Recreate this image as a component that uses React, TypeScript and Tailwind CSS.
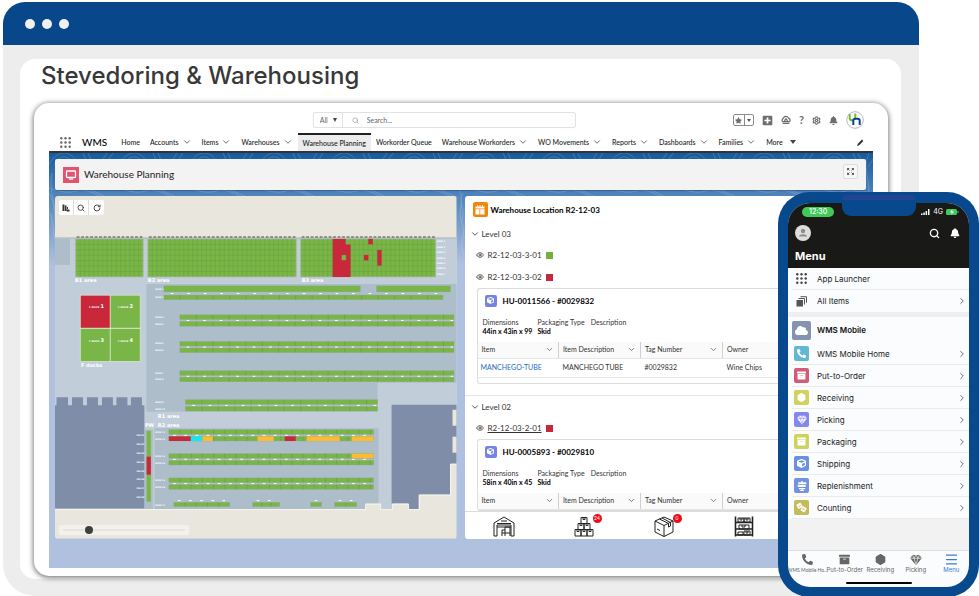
import React from "react";
import {
  FaPhoneAlt,
  FaCloud,
  FaArchive,
  FaStar,
  FaBell,
  FaCube,
  FaPlusSquare,
} from "react-icons/fa";
import { BsHexagonFill } from "react-icons/bs";
import {
  ChevronDown,
  ChevronRight,
  Search,
  Settings,
  RotateCw,
  Eye,
  Menu as MenuIcon,
} from "lucide-react";

const GREEN = "#7ab547";
const RED = "#c8283a";
const AMBER = "#fdbb30";
const CYAN = "#12e9f2";
const SLATE = "#808da8";
const FLOOR = "#adbdca";
const LIGHT = "#c1ceda";

/* ---------- small drawings ---------- */

function Waffle({ className }: { className: string }) {
  return (
    <svg viewBox="0 0 11 11" className={className} fill="currentColor" aria-hidden="true">
      {[1.3, 5.5, 9.7].map((y) =>
        [1.3, 5.5, 9.7].map((x) => <circle key={`${x}-${y}`} cx={x} cy={y} r="1.2" />)
      )}
    </svg>
  );
}

function Gem({ className }: { className: string }) {
  return (
    <svg viewBox="0 0 24 22" className={className} aria-hidden="true">
      <path d="M5 1h14l4.500 6.500L12 21.500.5 7.500z" fill="currentColor" />
      <path
        d="M1 7.500h22M8 7.500L12 20l4-12.500M5 1l3 6.500L12 1l4 6.500L19 1"
        fill="none"
        stroke="var(--gem-line)"
        strokeWidth="1.300"
      />
    </svg>
  );
}

function Signpost({ className }: { className: string }) {
  return (
    <svg viewBox="0 0 16 16" className={className} fill="currentColor" aria-hidden="true">
      <path d="M7 0h2v2h5l1.500 1.500L14 5H2V2h5zM2 6.500h12v3H2L.5 8zM3 11h10v2H9v1.500h2V16H5v-1.500h2V13H3z" />
    </svg>
  );
}

function Tally({ className }: { className: string }) {
  return (
    <svg viewBox="0 0 16 16" className={className} aria-hidden="true">
      <rect x="1.500" y="2" width="7" height="7" rx="1" transform="rotate(-30 5 5.500)" fill="currentColor" />
      <rect x="7.500" y="7" width="7" height="7" rx="1" transform="rotate(30 11 10.500)" fill="currentColor" />
      <path d="M3.500 6l1.300 1.200L7 4.200M9 9l4 3M10 12l2-3" stroke="#c5bb5b" strokeWidth="1" fill="none" />
    </svg>
  );
}

function Layers({ className }: { className: string }) {
  return (
    <svg viewBox="0 0 11 11" className={className} aria-hidden="true">
      <rect x="0.500" y="4" width="6.500" height="6.500" fill="currentColor" />
      <path d="M2.500 2.500h6v6M4.500.7h6v6" fill="none" stroke="currentColor" strokeWidth="1" />
    </svg>
  );
}

function Monitor({ className }: { className: string }) {
  return (
    <svg viewBox="0 0 16 16" className={className} aria-hidden="true">
      <rect x="3.500" y="4" width="9" height="6.500" rx="0.800" fill="none" stroke="white" strokeWidth="1.300" />
      <path d="M6 11.500h4v1.200H6z" fill="white" />
    </svg>
  );
}

function Expand({ className }: { className: string }) {
  return (
    <svg viewBox="0 0 8 8" className={className} fill="none" stroke="#444" strokeWidth="1" aria-hidden="true">
      <path d="M.5 2.500v-2h2M5.500.5h2v2M7.500 5.500v2h-2M2.500 7.500h-2v-2M.8.8l2 2M7.200.8l-2 2M7.200 7.200l-2-2M.8 7.200l2-2" />
    </svg>
  );
}

function Guidance({ className }: { className: string }) {
  return (
    <svg viewBox="0 0 12 11" className={className} fill="none" stroke="#706e6b" strokeWidth="1.500" aria-hidden="true">
      <path d="M1.800 7.500A3 3 0 0 1 2.800 3.500 3.300 3.300 0 0 1 9 3.300a2.700 2.700 0 0 1 1.300 4.200z" />
      <path d="M4 6.500l2-2.500 2 2.500M2 9.500h8" />
    </svg>
  );
}

function Logo({ className }: { className: string }) {
  return (
    <svg viewBox="0 0 18 18" className={className} role="img" aria-label="User">
      <circle cx="9" cy="9" r="8.300" fill="white" stroke="#9c9c9c" strokeWidth="0.700" />
      <path d="M3.700 3v4.300a2 2 0 0 0 2 2h2" fill="none" stroke="#6dbb2a" strokeWidth="1.900" />
      <path d="M9.300 2.500v6" fill="none" stroke="#6dbb2a" strokeWidth="1.900" />
      <path d="M7.300 14V9.500a1.700 1.700 0 0 1 1.700-1.700h2.700a2 2 0 0 1 2 2V14" fill="none" stroke="#0d3f8f" strokeWidth="2" />
    </svg>
  );
}

function Contours() {
  const xs = Array.from({ length: 13 }, (_, i) => i * 70);
  return (
    <svg viewBox="0 0 824 415" preserveAspectRatio="none" className="absolute inset-0 size-full" aria-hidden="true">
      <g fill="none" stroke="white" strokeWidth="0.600" opacity="0.280">
        {xs.map((x) => (
          <g key={x}>
            <path d={`M${x} 12C${x + 8} -4 ${x + 22} -4 ${x + 30} 12`} />
            <path d={`M${x + 5} 12C${x + 11} 1 ${x + 19} 1 ${x + 25} 12`} />
            <path d={`M${x + 34} 0l6 14M${x + 39} 0l6 14M${x + 58} 0l-9 14M${x + 64} 0l-9 14`} />
            <path d={`M${x} 35c12 4 20 6 30 2s18 4 30 8M${x + 8} 32c10 5 30 2 44 12`} />
          </g>
        ))}
        <path d="M0 40c8 12 5 30 8 46M3 20c-4 20 4 26 4 50M1 60c5 14 2 20 6 30M410 36c6 12-2 22 3 34s-4 22 2 32M414 40c-6 10 4 18-2 30M820 0c-8 18 4 28-2 50" />
      </g>
    </svg>
  );
}

/* ---------- warehouse map ---------- */

function Strip({ x, x2, y, h = 4, cell = 16.500, fill = GREEN }: { x: number; x2: number; y: number; h?: number; cell?: number; fill?: string }) {
  const ticks: number[] = [];
  for (let t = x + cell; t < x2 - 2; t += cell) ticks.push(t);
  return (
    <g>
      <rect x={x} y={y} width={x2 - x} height={h} fill={fill} stroke="#92a98c" strokeWidth="0.400" />
      {ticks.map((t) => (
        <path key={t} d={`M${t} ${y}v${h}`} stroke="#5f983c" strokeWidth="0.500" />
      ))}
    </g>
  );
}

function Pair({ x, x2, y, y2, cell = 16.500 }: { x: number; x2: number; y: number; y2: number; cell?: number }) {
  const marks: number[] = [];
  for (let t = x + cell / 2; t < x2; t += cell) marks.push(t);
  return (
    <g>
      <Strip x={x} x2={x2} y={y} cell={cell} h={4.600} />
      <Strip x={x} x2={x2} y={y2} cell={cell} h={4.600} />
      {marks.map((m) => (
        <rect key={m} x={m - 1.300} y={(y + 4.600 + y2) / 2 - 0.500} width="2.600" height="1" fill="white" />
      ))}
    </g>
  );
}

function Block({ x, cols }: { x: number; cols: number }) {
  const w = cols * 4.500;
  return (
    <g>
      <rect x={x} y="239" width={w} height="38" fill={GREEN} stroke="#a9b8a0" strokeWidth="0.800" />
      {Array.from({ length: cols - 1 }, (_, i) => (
        <path key={i} d={`M${x + (i + 1) * 4.500} 239v38`} stroke="#68a53e" strokeWidth="0.600" />
      ))}
      {Array.from({ length: 6 }, (_, i) => (
        <path key={i} d={`M${x} ${239 + (i + 1) * 5.430}h${w}`} stroke="#68a53e" strokeWidth="0.600" />
      ))}
      <path d={`M${x + 1} 237h${w - 1}`} stroke="#777" strokeWidth="1.500" strokeDasharray="2.800 1.700" />
    </g>
  );
}

const rowLabels: [string, number][] = [
  ["ROW 1", 290], ["ROW 2", 298], ["ROW 3", 318], ["ROW 4", 325], ["ROW 5", 344.500], ["ROW 6", 351.500],
  ["ROW 7", 374], ["ROW 8", 380.500], ["ROW 9", 403.500], ["ROW 10", 410], ["ROW 11", 433.500], ["ROW 12", 440],
  ["ROW 13", 457.500], ["ROW 14", 464.500], ["ROW 15", 481.500], ["ROW 16", 488.500], ["ROW 17", 506],
];

function WarehouseMap() {
  return (
    <svg
      viewBox="55 196 402 343"
      className="block w-full font-['DejaVu_Sans',sans-serif] font-bold"
      role="img"
      aria-label="Warehouse floor plan"
    >
      <rect x="55" y="196" width="402" height="343" fill="#e9e6de" />
      <path d="M55 238H457V464H451V495H419V509.500H409V504H393V509.500H381V504H366V509.500H55z" fill={LIGHT} />
      <path d="M55 238H457" stroke="#a7b2ba" strokeWidth="1" />
      <rect x="55" y="239" width="15" height="26" fill={FLOOR} />
      <path d="M146.500 284H457V383H378V412H146.500z" fill={FLOOR} />
      <path d="M154.700 428.500H379V504H366V509.500H154.700z" fill={FLOOR} />
      <rect x="145" y="430" width="8" height="79.500" fill={FLOOR} />
      <path
        d="M55 509V405.500H56.500V397.500H68V405.500H72V397.500H83V405.500H87V397.500H98V405.500H102V397.500H113V405.500H116.500V397.500H127.500V405.500H131V397.500H142V405.500H144.500V509z"
        fill={SLATE}
      />
      <path d="M392 405H457V464H450.500V495H419V509.500H409V504H392z" fill={SLATE} />
      <rect x="453" y="410" width="4" height="16" fill="#e9e6de" />
      <rect x="453" y="437" width="4" height="16" fill="#e9e6de" />
      <path d="M55 510H366V504.500H381V510H393V504.500H409V510H420V495.500H451V464.500H457" fill="none" stroke="#f8f5ea" strokeWidth="1" />

      <Block x={75.700} cols={15} />
      <Block x={148} cols={33} />
      <Block x={301} cols={30} />
      <g fill={RED}>
        <path d="M333 239H346V244.500H351V277H333zM342 255v5.400h4.500V255z" fillRule="evenodd" />
        <rect x="368.700" y="239" width="4.500" height="5.400" />
        <rect x="364.300" y="255" width="4.500" height="5.400" />
        <rect x="377.700" y="250" width="4.300" height="15.700" />
      </g>

      <g fill="white" fontSize="5">
        <text x="75" y="282.300">B1 area</text>
        <text x="148" y="282.300">B2 area</text>
        <text x="302" y="282.300">B3 area</text>
        <text x="81" y="367.500">F docks</text>
        <text x="158" y="418">R1 area</text>
        <text x="158" y="427">R2 area</text>
        <text x="145" y="427">PW</text>
      </g>

      <g stroke="#dfe8d2" strokeWidth="0.700">
        <rect x="80.300" y="295.300" width="30" height="33" fill={RED} />
        <rect x="110.300" y="295.300" width="30" height="33" fill={GREEN} />
        <rect x="80.300" y="328.600" width="30" height="33" fill={GREEN} />
        <rect x="110.300" y="328.600" width="30" height="33" fill={GREEN} />
      </g>
      {[
        ["1", 89, 308], ["2", 118, 308], ["3", 89, 342.500], ["4", 118, 342.500],
      ].map(([n, x, y]) => (
        <text key={n} x={x} y={y} fill="white" fontSize="2.500">
          F DOCK<tspan fontSize="5" dx="1">{n}</tspan>
        </text>
      ))}

      <Strip x={164} x2={360.700} y={286} h={6} cell={300} />
      <Strip x={377} x2={451} y={286} h={6} cell={300} />
      <Strip x={164} x2={443.500} y={295.200} h={4.600} />
      <path d="M171 293.700H440" stroke="white" strokeWidth="1" strokeDasharray="2.600 13.900" />
      <Pair x={180} x2={454.500} y={315} y2={321.700} />
      <Pair x={180} x2={454.500} y={341.700} y2={348.200} />
      <Pair x={180} x2={454.500} y={371} y2={377.400} />
      <Pair x={185.500} x2={378} y={400} y2={406.700} />
      <Pair x={169} x2={374} y={430} y2={436.700} cell={11.200} />
      <Pair x={169} x2={374} y={454} y2={460.700} cell={11.200} />
      <Pair x={169} x2={374} y={478.300} y2={485} cell={11.200} />
      <Strip x={174} x2={230} y={502.700} h={4.300} cell={11.200} />
      <Strip x={253} x2={280} y={502.700} h={4.300} cell={9} />
      <Strip x={311} x2={322} y={502.700} h={4.300} />
      <Strip x={335} x2={357} y={502.700} h={4.300} cell={11.200} />
      <path d="M178 501H228M257 501H278M315 501H318M339 501H354" stroke="white" strokeWidth="1" strokeDasharray="2.600 8.600" />
      <rect x="169" y="436.700" width="22" height="4.600" fill={RED} />
      <rect x="191" y="436.700" width="11.500" height="4.600" fill={CYAN} />
      <rect x="202.500" y="436.700" width="10.500" height="4.600" fill={AMBER} />
      <rect x="257.700" y="436.700" width="16.300" height="4.600" fill={AMBER} />
      <rect x="285" y="436.700" width="11" height="4.600" fill={RED} />
      <rect x="307" y="436.700" width="33" height="4.600" fill={AMBER} />
      <rect x="352" y="436.700" width="22" height="4.600" fill={AMBER} />
      <rect x="352" y="454" width="22" height="4.600" fill={AMBER} />

      <rect x="146.700" y="431" width="4.300" height="71" fill={GREEN} />
      <rect x="146.700" y="457" width="4.300" height="18" fill={RED} />

      <g fill="white" fontSize="2.200">
        {rowLabels.map(([t, y]) => (
          <text key={t} x="155.500" y={y}>{t}</text>
        ))}
        {Array.from({ length: 7 }, (_, i) => (
          <text key={i} x="437.500" y={242.500 + i * 5.400}>{`ROW ${i + 1}`}</text>
        ))}
        {Array.from({ length: 8 }, (_, i) => (
          <text key={i} x="136.500" y={436.500 + i * 8.850}>{`PW-0${i + 1}`}</text>
        ))}
      </g>
    </svg>
  );
}

/* ---------- desktop window ---------- */

const navBefore = ["Home", "Accounts", "Items", "Warehouses"];
const navAfter = ["Workorder Queue", "Warehouse Workorders", "WO Movements", "Reports", "Dashboards", "Families"];
const plain = ["Home", "Workorder Queue"];

function NavItem({ label }: { label: string }) {
  return (
    <a href="#" className="flex items-center gap-[3px] px-[5px] whitespace-nowrap">
      {label}
      {!plain.includes(label) && <ChevronDown className="size-[10px] text-[#555]" strokeWidth={2} />}
    </a>
  );
}

function TopBar() {
  return (
    <div className="flex h-[18px] items-center">
      <div className="ml-[32%] flex h-[16px] w-[32%] items-center rounded-[2px] border border-[#e2e2e2] text-[7px] text-[#666]">
        <label className="relative flex h-full w-[29px] items-center border-r border-[#e2e2e2]">
          <select aria-label="Search scope" className="w-full appearance-none bg-transparent pl-[6px] outline-none">
            <option>All</option>
          </select>
          <span className="pointer-events-none absolute right-[5px] border-x-[2px] border-t-[4px] border-x-transparent border-t-[#444]" />
        </label>
        <Search className="ml-[9px] size-[7px] text-[#888]" />
        <input aria-label="Search" placeholder="Search..." className="ml-[8px] min-w-0 flex-1 bg-transparent outline-none placeholder:text-[#666]" />
      </div>
      <div className="mr-[9px] ml-auto flex items-center gap-[8px] text-[#706e6b]">
        <div className="flex h-[12px] w-[21px] items-center rounded-[2px] border border-[#8c8c8c]">
          <button aria-label="Favorite" className="flex h-full flex-1 items-center justify-center border-r border-[#8c8c8c]">
            <FaStar className="size-[7px]" />
          </button>
          <button aria-label="Favorites list" className="flex h-full w-[8px] items-center justify-center">
            <span className="border-x-[2px] border-t-[3px] border-x-transparent border-t-[#555]" />
          </button>
        </div>
        <button aria-label="Add"><FaPlusSquare className="size-[11px]" /></button>
        <button aria-label="Guidance"><Guidance className="size-[10px]" /></button>
        <button aria-label="Help" className="text-[11px] leading-[12px] font-bold">?</button>
        <button aria-label="Setup"><Settings className="size-[9px]" strokeWidth={3} /></button>
        <button aria-label="Notifications"><FaBell className="size-[9px]" /></button>
        <Logo className="size-[18px]" />
      </div>
    </div>
  );
}

function HandlingUnit({ id, dims, children }: { id: string; dims: string; children?: React.ReactNode }) {
  return (
    <section className="ml-[12px] rounded-l-[3px] border border-r-0 border-[#dcdcdc]">
      <h4 className="flex h-[23px] items-center gap-[6px] pl-[7px] text-[8px] font-bold text-black">
        <span className="flex size-[12px] items-center justify-center rounded-[2px] bg-[#7584e2]">
          <FaCube className="size-[7px] text-white" />
        </span>
        {id}
      </h4>
      <dl className="flex h-[30px] gap-[6px] pt-[6px] pl-[5px] text-[7px] leading-[9px]">
        <div className="w-[49px] whitespace-nowrap"><dt>Dimensions</dt><dd className="font-bold text-black">{dims}</dd></div>
        <div><dt>Packaging Type</dt><dd className="font-bold text-black">Skid</dd></div>
        <div><dt>Description</dt></div>
      </dl>
      <table className="w-full table-fixed text-left text-[7px] leading-[9px]">
        <colgroup>
          <col className="w-[81px]" />
          <col className="w-[82px]" />
          <col className="w-[82px]" />
          <col />
        </colgroup>
        <thead>
          <tr className="h-[16px] bg-[#fafafa]">
            {["Item", "Item Description", "Tag Number", "Owner"].map((h, i) => (
              <th key={h} className={i < 3 ? "border-r border-r-[#cfcfcf] border-b border-b-[#e5e5e5] px-[4px] font-normal" : "border-b border-[#e5e5e5] px-[4px] font-normal"}>
                <span className="flex items-center justify-between">
                  {h}
                  {i < 3 && <ChevronDown className="size-[9px] text-[#555]" strokeWidth={2} />}
                </span>
              </th>
            ))}
          </tr>
        </thead>
        {children}
      </table>
    </section>
  );
}

function Location({ code, color, underlined }: { code: string; color: string; underlined?: boolean }) {
  return (
    <div className="flex h-[22px] items-center gap-[4px] pl-[11px] text-[8px]">
      <Eye className="size-[8px] text-[#444]" strokeWidth={2.5} />
      <span className={underlined ? "underline" : ""}>{code}</span>
      <span className={color} />
    </div>
  );
}

function Level({ name }: { name: string }) {
  return (
    <h3 className="flex h-[21px] items-center gap-[2px] pl-[5px] text-[8px]">
      <ChevronDown className="size-[10px]" strokeWidth={2} />
      {name}
    </h3>
  );
}

function FooterIcons() {
  return (
    <div className="flex h-[28px] border-t border-[#dcdcdc] pt-[3px] pl-[28px]">
      <button aria-label="Warehouse" className="w-[80px] shrink-0">
        <svg viewBox="0 0 22 21" className="h-[21px] w-[22px]" fill="none" stroke="#222" strokeWidth="1">
          <path d="M1 20V7l10-6 10 6v13h-3V9H4v11zM4 7.500h14M8 5h6M9 14h3v-3h5v9M9 20v-6M9 17h8M12 14v6M4 11h14" />
        </svg>
      </button>
      <button aria-label="Stock, 24 alerts" className="relative w-[80px] shrink-0">
        <svg viewBox="0 0 20 21" className="ml-[1px] h-[21px] w-[20px]" fill="none" stroke="#222" strokeWidth="1">
          <path d="M7 1.500h6v6H7zM4 7.500h6v6H4zM10 7.500h6v6h-6zM1 13.500h6v6.500H1zM7 13.500h6v6.500H7zM13 13.500h6v6.500h-6zM9 1.500v2h2v-2M6 7.500v2h2v-2M12 7.500v2h2v-2M3 13.500v2h2v-2M9 13.500v2h2v-2M15 13.500v2h2v-2" />
        </svg>
        <span className="absolute top-[-1px] left-[20px] flex size-[9px] items-center justify-center rounded-full bg-[#f00a14] text-[5px] leading-[5px] text-white">24</span>
      </button>
      <button aria-label="Packages, 0 alerts" className="relative w-[80px] shrink-0">
        <svg viewBox="0 0 20 21" className="ml-[1px] h-[21px] w-[20px]" fill="none" stroke="#222" strokeWidth="1">
          <path d="M10 1l9 4v11l-9 4.500L1 16V5zM1 5l9 4.500L19 5M10 9.500v11M5.500 3l9 4.500V11l2-1V6.500L8 2M3 13l3 1.500" />
        </svg>
        <span className="absolute top-[-1px] left-[20px] flex size-[9px] items-center justify-center rounded-full bg-[#f00a14] text-[5px] leading-[5px] text-white">0</span>
      </button>
      <button aria-label="Racks" className="w-[80px] shrink-0">
        <svg viewBox="0 0 20 21" className="ml-[1px] h-[21px] w-[20px]" fill="none" stroke="#222" strokeWidth="1">
          <path d="M1.500.5v20M18.500.5v20M2 6.500h16M2 13h16M2 19h16" strokeWidth="1.600" />
          <path d="M4 2h6v4H4zM10 2h6v4h-6zM6 2v2h2V2M12 2v2h2V2M5 9h10v4H5zM8 9v2h3V9M4 16h5v3H4zM10 15h6v4h-6zM12 15v2h2v-2" />
        </svg>
      </button>
    </div>
  );
}

function DetailPanel() {
  return (
    <div className="flex min-w-0 flex-col overflow-hidden rounded-[3px] bg-white text-[#333]">
      <h2 className="flex h-[27px] items-center gap-[3px] pl-[8px] text-[8px] font-bold text-black">
        <span className="flex size-[15px] items-center justify-center rounded-[2px] bg-[#f0870a]">
          <svg viewBox="0 0 10 10" className="size-[10px]" fill="white" aria-hidden="true">
            <path d="M.5 1.500h9v2h-9zM.5 4.200h4v5.300h-4zM5.200 4.200h4.300v5.300H5.200zM2 .3h1v1H2zM4.500.3h1v1h-1zM7 .3h1v1H7z" />
          </svg>
        </span>
        Warehouse Location R2-12-03
      </h2>
      <Level name="Level 03" />
      <Location code="R2-12-03-3-01" color="size-[7px] bg-[#73b13f]" />
      <Location code="R2-12-03-3-02" color="size-[7px] bg-[#c8283a]" />
      <HandlingUnit id="HU-0011566 - #0029832" dims="44in x 43in x 99">
        <tbody>
          <tr className="h-[19px] border-b border-[#e8e8e8]">
            <td className="px-[3px]"><a href="#" className="text-[#1b6cc0]">MANCHEGO-TUBE</a></td>
            <td className="px-[4px]">MANCHEGO TUBE</td>
            <td className="px-[4px]">#0029832</td>
            <td className="px-[4px]">Wine Chips</td>
          </tr>
          <tr className="h-[6px]"><td colSpan={4} /></tr>
        </tbody>
      </HandlingUnit>
      <div className="mt-[11px] border-t border-[#e5e5e5]">
        <Level name="Level 02" />
      </div>
      <Location code="R2-12-03-2-01" color="size-[7px] bg-[#c8283a]" underlined />
      <HandlingUnit id="HU-0005893 - #0029810" dims="58in x 40in x 45" />
      <div className="mt-auto">
        <FooterIcons />
      </div>
    </div>
  );
}

function Desktop() {
  return (
    <div className="relative mr-[13px] ml-[14px] rounded-[15px] bg-white px-[15px] pt-[8px] pb-[8px] font-['Lato',sans-serif] shadow-[0_1px_5px_1px_rgba(0,0,0,0.5)]">
      <TopBar />
      <nav className="mt-[4px] flex h-[20px] items-center border-b-[2px] border-[#333] text-[7px] font-medium text-[#222]">
        <button aria-label="App launcher" className="ml-[11px]"><Waffle className="size-[11px] text-[#666]" /></button>
        <span className="mr-[9px] ml-[11px] text-[10px] text-black">WMS</span>
        {navBefore.map((n) => <NavItem key={n} label={n} />)}
        <a href="#" className="flex h-full items-center border-t-[2px] border-[#222] bg-[#ececec] px-[5px] whitespace-nowrap">Warehouse Planning</a>
        {navAfter.map((n) => <NavItem key={n} label={n} />)}
        <a href="#" className="flex items-center gap-[7px] px-[5px]">
          More <span className="border-x-[3px] border-t-[4px] border-x-transparent border-t-[#444]" />
        </a>
        <button aria-label="Edit navigation" className="mr-[9px] ml-auto">
          <svg viewBox="0 0 7 7" className="size-[7px]"><path d="M0 7l.8-2.200L5 .6l1.400 1.400L2.200 6.200z" fill="#333" /></svg>
        </button>
      </nav>
      <main className="relative bg-linear-to-b from-[#155b9e] from-0% via-[#4f84bb] via-10% to-[#b0c1df] to-27% px-[6px] pt-[6px] pb-[29px]">
        <Contours />
        <header className="relative mr-[1px] flex h-[31px] items-center rounded-[2px] bg-[#f3f3f3] pr-[8px] pl-[8px] shadow-[0_1px_1px_rgba(0,0,0,0.25)]">
          <span className="bg-[#df5470]"><Monitor className="size-[16px]" /></span>
          <h1 className="ml-[5px] text-[10px] text-[#222]">Warehouse Planning</h1>
          <button aria-label="Expand" className="mb-[6px] ml-auto flex size-[15px] items-center justify-center rounded-[2px] border border-[#dcdcdc] bg-[#f7f7f7]">
            <Expand className="size-[7px]" />
          </button>
        </header>
        <div className="relative mt-[6px] mr-[1px] grid grid-cols-2 gap-[8px]">
          <div className="relative min-w-0 overflow-hidden rounded-[3px]">
            <WarehouseMap />
            <div className="absolute top-[4px] left-[4px] flex divide-x divide-[#ddd] overflow-hidden rounded-[2px] bg-white text-[#333]">
              <button aria-label="Legend" className="flex size-[15px] items-center justify-center">
                <svg viewBox="0 0 8 8" className="size-[8px]" fill="currentColor"><path d="M.5.500h2V7h-2zM3 1.500h1.500V7H3zM5 3h1v2H5zM4.700 5.500H7.500v2H4.700z" /></svg>
              </button>
              <button aria-label="Find" className="flex size-[15px] items-center justify-center"><Search className="size-[8px]" strokeWidth={2.5} /></button>
              <button aria-label="Reload" className="flex size-[15px] items-center justify-center"><RotateCw className="size-[8px]" strokeWidth={2.5} /></button>
            </div>
            <div className="absolute bottom-[4px] left-[4px] flex h-[10px] w-[130px] items-center rounded-[2px] bg-[#f3f1ec] px-[4px]">
              <input
                type="range"
                aria-label="Zoom"
                defaultValue={19}
                className="h-[2px] w-full appearance-none bg-[#e6e4e0] [&::-webkit-slider-thumb]:size-[8px] [&::-webkit-slider-thumb]:appearance-none [&::-webkit-slider-thumb]:rounded-full [&::-webkit-slider-thumb]:bg-[#3e403c]"
              />
            </div>
          </div>
          <DetailPanel />
        </div>
      </main>
    </div>
  );
}

/* ---------- phone ---------- */

const apps: [string, string, React.ReactNode][] = [
  ["WMS Mobile Home", "bg-[#62b7d3]", <FaPhoneAlt className="size-[9px]" />],
  ["Put-to-Order", "bg-[#d45a7a]", <FaArchive className="size-[9px]" />],
  ["Receiving", "bg-[#cfd25c]", <BsHexagonFill className="size-[9px]" />],
  ["Picking", "bg-[#8687ee] [--gem-line:#8687ee]", <Gem className="size-[10px]" />],
  ["Packaging", "bg-[#cfd25c]", <FaArchive className="size-[9px]" />],
  ["Shipping", "bg-[#6b90dc]", <FaCube className="size-[9px]" />],
  ["Replenishment", "bg-[#7392e0]", <Signpost className="size-[10px]" />],
  ["Counting", "bg-[#c5bb5b]", <Tally className="size-[11px]" />],
];

const tabs: [string, React.ReactNode][] = [
  ["WMS Mobile Ho...", <FaPhoneAlt className="size-[11px]" />],
  ["Put-to-Order", <FaArchive className="size-[11px]" />],
  ["Receiving", <BsHexagonFill className="size-[11px]" />],
  ["Picking", <Gem className="size-[12px]" />],
  ["Menu", <MenuIcon className="size-[15px]" strokeWidth={2} />],
];

function Phone() {
  return (
    <aside className="absolute top-[192px] right-0 w-[201px] overflow-hidden rounded-[32px] bg-[#07498c] px-[10px] pt-[11px] pb-[10px] font-['Inter',sans-serif]">
      <div className="absolute top-[3px] left-[64px] z-10 h-[21px] w-[74px] rounded-t-[8px] rounded-b-[9px] bg-[#07498c]">
        <div className="h-[5px] rounded-t-[8px] bg-[#22458f]" />
      </div>
      <div className="overflow-hidden rounded-[22px] bg-[#fafcfd]">
        <header className="h-[65px] bg-[#191917] px-[7px] pt-[4px] text-white">
          <div className="flex h-[10px] items-center justify-between pr-[3px] pl-[7px] text-[7px] leading-[10px]">
            <span className="rounded-full bg-[#3fca5a] px-[7px] font-medium">12:30</span>
            <span className="flex items-center gap-[3px]">
              <svg viewBox="0 0 9 6" className="h-[6px] w-[9px]" fill="white"><path d="M0 4.500h1.500V6H0zM2.300 3.500h1.500V6H2.300zM4.600 2h1.500v4H4.600zM7 0h1.500v6H7z" /></svg>
              4G
              <svg viewBox="0 0 13 6" className="h-[6px] w-[13px]"><rect width="11" height="6" rx="1.500" fill="#3fca5a" /><path d="M6.500 0L4 3.500h2L5 6l3-3.500H6z" fill="white" /><path d="M12 2v2" stroke="#999" /></svg>
            </span>
          </div>
          <div className="mt-[8px] flex h-[16px] items-center">
            <svg viewBox="0 0 16 16" className="size-[16px]" aria-hidden="true">
              <circle cx="8" cy="8" r="8" fill="#dedede" />
              <circle cx="8" cy="6" r="2.200" fill="#8d8d8d" />
              <path d="M4 11.500c0-3 8-3 8 0z" fill="#8d8d8d" />
            </svg>
            <button aria-label="Search" className="mr-[10px] ml-auto"><Search className="size-[11px]" strokeWidth={3} /></button>
            <button aria-label="Notifications" className="mr-[2px]"><FaBell className="size-[10px]" /></button>
          </div>
          <h2 className="mt-[8px] text-[11px] leading-[14px] font-bold">Menu</h2>
        </header>
        <ul className="pl-[4px] text-[8px] text-[#222]">
          <li className="flex h-[22px] items-center gap-[10px] border-b border-[#ebebeb] pl-[4px]">
            <Waffle className="size-[11px] text-[#444]" />App Launcher
          </li>
          <li className="flex h-[22px] items-center gap-[10px] pr-[2px] pl-[4px]">
            <Layers className="size-[11px] text-[#555]" />All Items
            <ChevronRight className="ml-auto size-[10px] text-[#555]" strokeWidth={2} />
          </li>
        </ul>
        <div className="h-[5px] bg-[#efefef]" />
        <h3 className="flex h-[26px] items-center gap-[6px] pl-[4px] text-[8px] font-semibold text-[#111]">
          <span className="flex size-[19px] items-center justify-center rounded-[2px] bg-[#8593b0] text-white"><FaCloud className="size-[13px]" /></span>
          WMS Mobile
        </h3>
        <ul className="pl-[4px] text-[8px] text-[#222]">
          {apps.map(([name, color, icon]) => (
            <li key={name} className="border-b border-[#ebebeb]">
              <a href="#" className="flex h-[21px] items-center gap-[8px] pr-[2px] pl-[2px]">
                <span className={`flex size-[15px] items-center justify-center rounded-[2px] text-white ${color}`}>{icon}</span>
                {name}
                <ChevronRight className="ml-auto size-[10px] text-[#555]" strokeWidth={2} />
              </a>
            </li>
          ))}
        </ul>
        <div className="h-[31px] bg-[#f2f2f2]" />
        <footer className="border-t border-[#ddd] pt-[2px] pb-[3px]">
          <div className="grid grid-cols-[39px_repeat(4,1fr)] text-[6px] leading-[8px] text-[#666] [--gem-line:#fafcfd]">
            {tabs.map(([name, icon], i) => (
              <a key={name} href="#" className={i === 4 ? "flex flex-col items-center text-[#3c78d2]" : "flex min-w-0 flex-col items-center"}>
                <span className="flex h-[13px] items-center">{icon}</span>
                <span className={i === 0 ? "font-['Lato',sans-serif] text-[5px] whitespace-nowrap" : "whitespace-nowrap"}>{name}</span>
              </a>
            ))}
          </div>
          <div className="mx-auto mt-[8px] h-[2px] w-[66px] rounded-full bg-black" />
        </footer>
      </div>
    </aside>
  );
}

export default function App() {
  return (
    <div className="relative overflow-hidden bg-white pt-[2px]">
      <div className="mr-[60px] ml-[3px] overflow-hidden rounded-t-[22px] rounded-b-[32px] bg-[#ededed] pb-[17px]">
        <div className="flex h-[43px] items-center gap-[7px] bg-[#07478a] pl-[22px]">
          <span className="size-[10px] rounded-full bg-[#f0f0f0]" />
          <span className="size-[10px] rounded-full bg-[#f0f0f0]" />
          <span className="size-[10px] rounded-full bg-[#f0f0f0]" />
        </div>
        <div className="mt-[14px] mr-[18px] ml-[17px] rounded-[15px] bg-white pb-[3px]">
          <p className="flex h-[44px] items-center pb-[11px] pl-[21px] font-['Inter',sans-serif] text-[24px] font-medium text-[#383838]">
            Stevedoring &amp; Warehousing
          </p>
          <Desktop />
        </div>
      </div>
      <Phone />
    </div>
  );
}
